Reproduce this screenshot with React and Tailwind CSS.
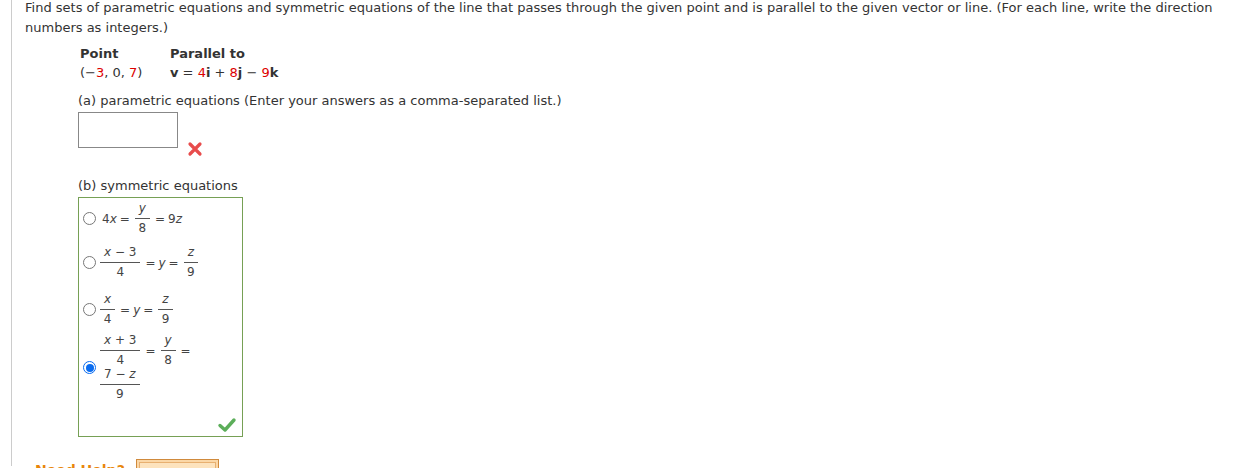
import React from "react"

const V = ({ children }) => <i className="italic">{children}</i>
const R = ({ children }) => <span className="text-[#d00]">{children}</span>
const Eq = () => <span className="mx-[3px]">=</span>

const Frac = ({ num, den }) => (
  <span className="inline-flex flex-col items-center align-middle mx-[2px]">
    <span className="px-[4px] leading-[13px] pb-[3px]">{num}</span>
    <span className="w-full border-t border-[#555] text-center leading-[13px] pt-[3px]">{den}</span>
  </span>
)

const Radio = ({ checked }) =>
  checked ? (
    <span className="w-[13px] h-[13px] rounded-full border border-[#0a6cf0] bg-white flex items-center justify-center shrink-0">
      <span className="w-[8px] h-[8px] rounded-full bg-[#0a6cf0]" />
    </span>
  ) : (
    <span className="w-[13px] h-[13px] rounded-full border border-[#777] bg-white shrink-0" />
  )

export default function App() {
  return (
    <div
      className="w-[1257px] h-[468px] overflow-hidden bg-white text-[#333] text-[13px]"
      style={{ fontFamily: '"DejaVu Sans", Verdana, sans-serif' }}
    >
      <div className="ml-[11px] border-l border-[#ccc] h-full pl-[13px] pr-[30px]">
        <p className="leading-[20px] -mt-[2px]">
          Find sets of parametric equations and symmetric equations of the line that passes through the given point and is parallel to the given vector or line. (For each line, write the direction numbers as integers.)
        </p>

        {/* point / vector table */}
        <div className="ml-[55px] mt-[6px] grid grid-cols-[90px_auto] leading-[19px]">
          <span className="font-bold">Point</span>
          <span className="font-bold">Parallel to</span>
          <span>(−<R>3</R>, 0, <R>7</R>)</span>
          <span>
            <b>v</b> = <R>4</R><b>i</b> + <R>8</R><b>j</b> − <R>9</R><b>k</b>
          </span>
        </div>

        {/* part a */}
        <div className="ml-[53px] mt-[9px]">
          <p className="leading-[19px]">(a) parametric equations (Enter your answers as a comma-separated list.)</p>
          <div className="flex items-start mt-[2px]">
            <div className="w-[100px] h-[36px] border border-[#888] bg-white" />
            <svg width="16" height="16" viewBox="0 0 16 16" className="ml-[9px] mt-[29px]">
              <path d="M3 3 L13 13 M13 3 L3 13" stroke="#e84c4c" strokeWidth="3.2" strokeLinecap="round" />
            </svg>
          </div>
        </div>

        {/* part b */}
        <div className="ml-[53px] mt-[19px]">
          <p className="leading-[19px]">(b) symmetric equations</p>
          <div className="mt-[2px] w-[165px] h-[240px] border border-[#76a055] relative text-[12px] text-[#444]">
            <div className="flex items-center gap-[6px] pl-[4px] mt-[4px]">
              <Radio />
              <span className="flex items-center">
                4<V>x</V>
                <Eq />
                <Frac num={<V>y</V>} den="8" />
                <Eq />
                9<V>z</V>
              </span>
            </div>

            <div className="flex items-center gap-[2px] pl-[4px] mt-[11px]">
              <Radio />
              <span className="flex items-center">
                <Frac num={<><V>x</V> − 3</>} den="4" />
                <Eq />
                <V>y</V>
                <Eq />
                <Frac num={<V>z</V>} den="9" />
              </span>
            </div>

            <div className="flex items-center gap-[2px] pl-[4px] mt-[14px]">
              <Radio />
              <span className="flex items-center">
                <Frac num={<V>x</V>} den="4" />
                <Eq />
                <V>y</V>
                <Eq />
                <Frac num={<V>z</V>} den="9" />
              </span>
            </div>

            <div className="flex items-center gap-[2px] pl-[4px] mt-[8px]">
              <Radio checked />
              <span className="flex flex-col items-start">
                <span className="flex items-center">
                  <Frac num={<><V>x</V> + 3</>} den="4" />
                  <Eq />
                  <Frac num={<V>y</V>} den="8" />
                  <Eq />
                </span>
                <span className="flex items-center mt-[1px]">
                  <Frac num={<>7 − <V>z</V></>} den="9" />
                </span>
              </span>
            </div>

            <svg width="20" height="16" viewBox="0 0 20 16" className="absolute right-[5px] bottom-[3px]">
              <path d="M3 8.5 L8 13 L17 3" fill="none" stroke="#5cae5a" strokeWidth="3.4" strokeLinecap="round" strokeLinejoin="round" />
            </svg>
          </div>
        </div>

        {/* help row (clipped by the window edge) */}
        <div className="flex items-start mt-[24px] ml-[10px]">
          <span className="font-bold text-[#e8860c] text-[14px] leading-[18px]">Need Help?</span>
          <span className="ml-[11px] -mt-[2px] w-[83px] h-[20px] border border-[#d08a3c] bg-[#fbd7a6] p-[2px]">
            <span className="block w-full h-full border border-[#e8b070] bg-[#fde3bd]" />
          </span>
        </div>
      </div>
    </div>
  )
}
